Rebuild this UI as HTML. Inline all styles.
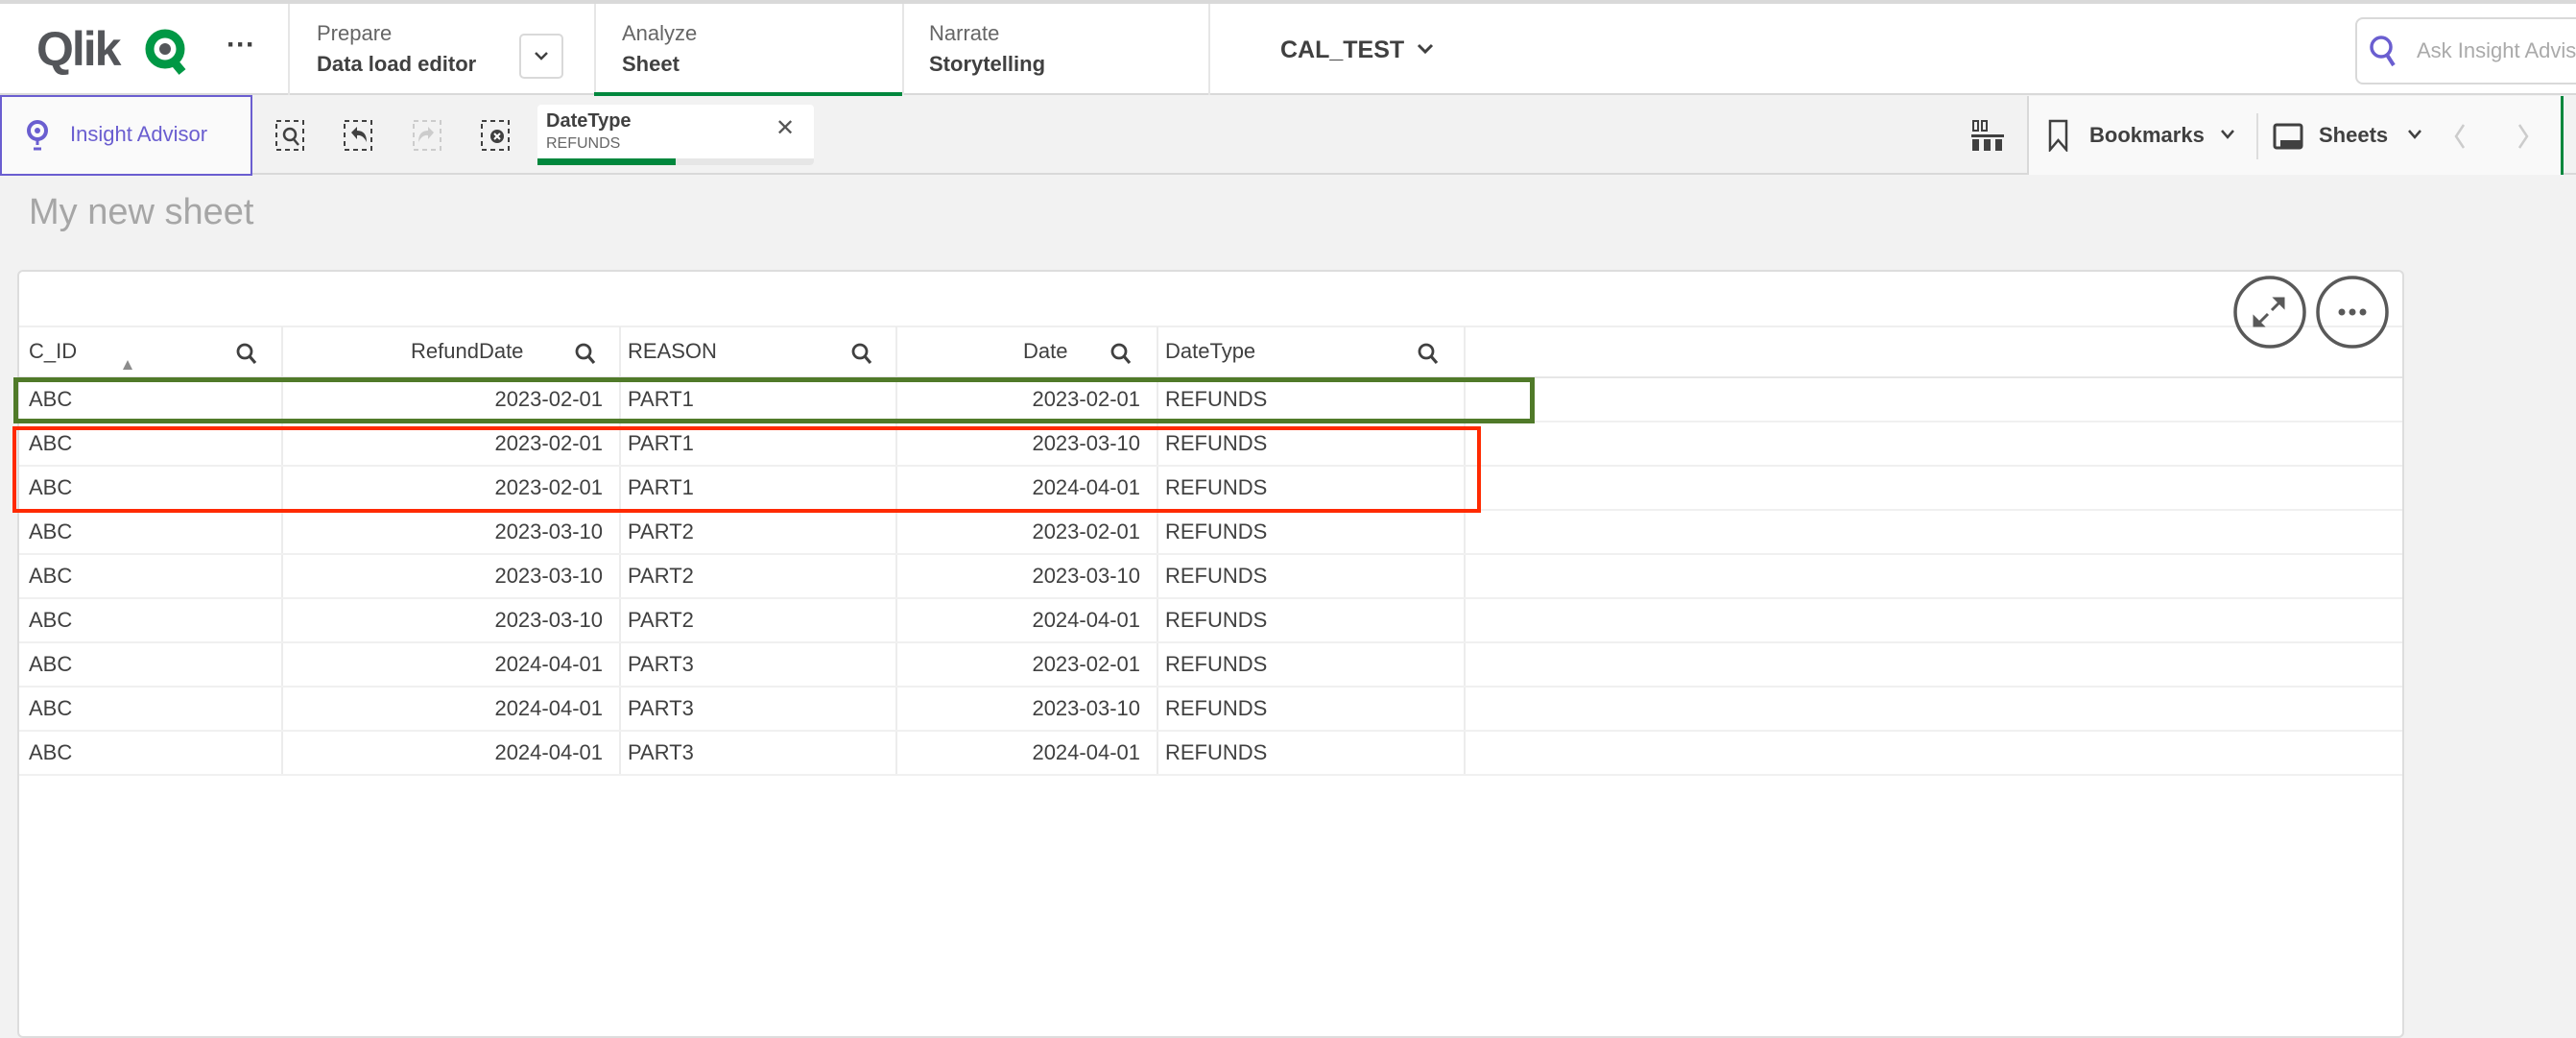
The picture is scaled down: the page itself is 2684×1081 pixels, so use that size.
<!DOCTYPE html>
<html><head><meta charset="utf-8"><style>
*{box-sizing:border-box;margin:0;padding:0}
body{width:2684px;height:1077px;overflow:hidden;background:#f2f2f2;font-family:"Liberation Sans",sans-serif;color:#404040;position:relative}
.a{position:absolute}
.t{position:absolute;white-space:nowrap}
.row{position:absolute;left:20px;width:2483px;height:46px;border-bottom:2px solid #f0f0f0}
.c{position:absolute;top:0;height:44px;line-height:44px;font-size:22px;color:#404040}
.vl{position:absolute;top:340px;width:2px;height:468px;background:#ececec}
</style></head><body>
<div class="a" style="left:0;top:0;width:2684px;height:4px;background:#d9d9d9"></div>
<div class="a" style="left:0;top:4px;width:2684px;height:95px;background:#fff;border-bottom:2px solid #d9d9d9"></div>
<!-- logo -->
<div class="t" style="left:38px;top:22px;font-size:50px;font-weight:bold;color:#54565a;letter-spacing:-2px">Qlik</div>
<svg class="a" style="left:150px;top:29px" width="52" height="50" viewBox="0 0 52 50"><circle cx="22" cy="22" r="16" fill="none" stroke="#009845" stroke-width="9"/><circle cx="22" cy="22" r="6" fill="#54565a"/><path d="M30 34 L40 46" stroke="#009845" stroke-width="9"/></svg>
<div class="t" style="left:236px;top:30px;font-size:30px;font-weight:bold;color:#404040">···</div>
<div class="a" style="left:300px;top:4px;width:2px;height:95px;background:#e6e6e6"></div>
<div class="a" style="left:619px;top:4px;width:2px;height:95px;background:#e6e6e6"></div>
<div class="a" style="left:940px;top:4px;width:2px;height:95px;background:#e6e6e6"></div>
<div class="a" style="left:1259px;top:4px;width:2px;height:95px;background:#e6e6e6"></div>
<div class="t" style="left:330px;top:22px;font-size:22px;color:#666">Prepare</div>
<div class="t" style="left:330px;top:54px;font-size:22px;font-weight:bold;color:#404040">Data load editor</div>
<div class="a" style="left:541px;top:35px;width:46px;height:47px;border:2px solid #d9d9d9;border-radius:5px"></div>
<svg class="a" style="left:556px;top:52px" width="16" height="12"><path d="M2 3 L8 9 L14 3" fill="none" stroke="#404040" stroke-width="2.5"/></svg>
<div class="t" style="left:648px;top:22px;font-size:22px;color:#666">Analyze</div>
<div class="t" style="left:648px;top:54px;font-size:22px;font-weight:bold;color:#404040">Sheet</div>
<div class="a" style="left:619px;top:96px;width:321px;height:4px;background:#00873d"></div>
<div class="t" style="left:968px;top:22px;font-size:22px;color:#666">Narrate</div>
<div class="t" style="left:968px;top:54px;font-size:22px;font-weight:bold;color:#404040">Storytelling</div>
<div class="t" style="left:1334px;top:38px;font-size:25px;font-weight:bold;color:#404040">CAL_TEST</div>
<svg class="a" style="left:1475px;top:44px" width="20" height="14"><path d="M3 3 L10 10 L17 3" fill="none" stroke="#404040" stroke-width="3"/></svg>
<div class="a" style="left:2454px;top:18px;width:240px;height:70px;border:2px solid #d9d9d9;border-radius:8px;background:#fff"></div>
<svg class="a" style="left:2468px;top:36px" width="30" height="36"><circle cx="13" cy="13" r="10" fill="none" stroke="#6a5ed0" stroke-width="3.5"/><path d="M19 21 L26 32" stroke="#6a5ed0" stroke-width="4"/></svg>
<div class="t" style="left:2518px;top:40px;font-size:22px;color:#aaa">Ask Insight Advis</div>
<!-- toolbar -->
<div class="a" style="left:0;top:100px;width:2684px;height:82px;background:#f2f2f2;border-bottom:2px solid #d9d9d9"></div>
<div class="a" style="left:0;top:99px;width:263px;height:84px;border:2px solid #6a5ed0;background:#fafafa"></div>
<svg class="a" style="left:26px;top:124px" width="26" height="34"><circle cx="13" cy="12" r="9" fill="none" stroke="#6a5ed0" stroke-width="4"/><circle cx="13" cy="12" r="3" fill="#6a5ed0"/><path d="M13 21 L13 27 M9 31 L17 31" stroke="#6a5ed0" stroke-width="3"/></svg>
<div class="t" style="left:73px;top:127px;font-size:22px;color:#6a5ed0">Insight Advisor</div>
<svg class="a" style="left:286px;top:124px" width="260" height="34">
<g fill="none" stroke="#404040" stroke-width="2" stroke-dasharray="5 4"><rect x="2" y="2" width="28" height="30"/><rect x="73" y="2" width="28" height="30"/><rect x="216" y="2" width="28" height="30"/></g>
<rect x="145" y="2" width="28" height="30" fill="none" stroke="#ccc" stroke-width="2" stroke-dasharray="5 4"/>
<circle cx="16" cy="16" r="6" fill="none" stroke="#404040" stroke-width="2.5"/><path d="M20 21 L25 27" stroke="#404040" stroke-width="2.5"/>
<path d="M80 14 L86 8 L86 12 Q96 12 96 24 Q92 16 86 17 L86 21 Z" fill="#404040"/>
<path d="M166 14 L160 8 L160 12 Q150 12 150 24 Q154 16 160 17 L160 21 Z" fill="#ccc"/>
<circle cx="232" cy="18" r="7" fill="#404040"/><path d="M229 15 L235 21 M235 15 L229 21" stroke="#fff" stroke-width="2"/>
</svg>
<div class="a" style="left:560px;top:109px;width:288px;height:63px;background:#fff;border-radius:4px"></div>
<div class="a" style="left:560px;top:165px;width:288px;height:7px;background:#e6e6e6;border-radius:0 0 4px 4px"></div>
<div class="a" style="left:560px;top:165px;width:144px;height:7px;background:#00873d"></div>
<div class="t" style="left:569px;top:115px;font-size:20px;font-weight:bold;color:#404040">DateType</div>
<div class="t" style="left:569px;top:141px;font-size:16px;color:#666">REFUNDS</div>
<div class="t" style="left:808px;top:119px;font-size:24px;color:#555">✕</div>
<svg class="a" style="left:2054px;top:124px" width="34" height="34"><rect x="2" y="2" width="5" height="10" fill="none" stroke="#404040" stroke-width="2"/><rect x="11" y="2" width="5" height="10" fill="none" stroke="#404040" stroke-width="2"/><rect x="0" y="16" width="34" height="3" fill="#404040"/><rect x="1" y="21" width="7" height="12" fill="#404040"/><rect x="13" y="21" width="7" height="12" fill="#404040"/><rect x="25" y="21" width="7" height="12" fill="#404040"/></svg>
<div class="a" style="left:2112px;top:100px;width:558px;height:82px;background:#f9f9f9;border-left:2px solid #d9d9d9"></div>
<div class="a" style="left:2668px;top:100px;width:3px;height:82px;background:#00873d"></div>
<svg class="a" style="left:2134px;top:124px" width="22" height="34"><path d="M2 2 L19 2 L19 32 L10.5 22 L2 32 Z" fill="none" stroke="#404040" stroke-width="2.5"/></svg>
<div class="t" style="left:2177px;top:128px;font-size:22px;font-weight:bold;color:#404040">Bookmarks</div>
<svg class="a" style="left:2313px;top:134px" width="16" height="12"><path d="M2 2 L8 9 L14 2" fill="none" stroke="#404040" stroke-width="2.5"/></svg>
<div class="a" style="left:2351px;top:118px;width:2px;height:48px;background:#ddd"></div>
<svg class="a" style="left:2368px;top:128px" width="32" height="28"><rect x="2" y="2" width="28" height="24" rx="2" fill="none" stroke="#404040" stroke-width="3"/><rect x="8" y="18" width="22" height="8" fill="#404040"/></svg>
<div class="t" style="left:2416px;top:128px;font-size:22px;font-weight:bold;color:#404040">Sheets</div>
<svg class="a" style="left:2508px;top:134px" width="16" height="12"><path d="M2 2 L8 9 L14 2" fill="none" stroke="#404040" stroke-width="2.5"/></svg>
<svg class="a" style="left:2555px;top:127px" width="90" height="30"><path d="M12 3 L4 15 L12 27 M70 3 L78 15 L70 27" fill="none" stroke="#ccc" stroke-width="2.5"/></svg>
<!-- title -->
<div class="t" style="left:30px;top:200px;font-size:38px;color:#a6a6a6">My new sheet</div>
<!-- card -->
<div class="a" style="left:18px;top:281px;width:2487px;height:800px;background:#fff;border:2px solid #ddd;border-radius:6px"></div>
<div class="a" style="left:20px;top:339px;width:2483px;height:2px;background:#efefef"></div>
<svg class="a" style="left:2320px;top:280px" width="180" height="90"><g fill="none" stroke="#595959" stroke-width="3.5"><circle cx="45" cy="45" r="36"/><circle cx="131" cy="45" r="36"/></g>
<path d="M47 43 L57 33 M51 31 L59 31 L59 39 Z" stroke="#595959" stroke-width="3" fill="#595959"/><path d="M43 47 L33 57 M29 51 L29 59 L37 59 Z" stroke="#595959" stroke-width="3" fill="#595959"/>
<circle cx="120" cy="45" r="3.5" fill="#595959"/><circle cx="131" cy="45" r="3.5" fill="#595959"/><circle cx="142" cy="45" r="3.5" fill="#595959"/></svg>
<div class="vl" style="left:293px"></div><div class="vl" style="left:645px"></div><div class="vl" style="left:933px"></div><div class="vl" style="left:1205px"></div><div class="vl" style="left:1525px"></div>
<div class="a" style="left:20px;top:392px;width:2483px;height:2px;background:#e6e6e6"></div>
<div class="t" style="left:30px;top:353px;font-size:22px">C_ID</div>
<div class="t" style="left:428px;top:353px;font-size:22px">RefundDate</div>
<div class="t" style="left:654px;top:353px;font-size:22px">REASON</div>
<div class="t" style="left:1066px;top:353px;font-size:22px">Date</div>
<div class="t" style="left:1214px;top:353px;font-size:22px">DateType</div>
<svg class="a" style="left:0;top:350px" width="1520" height="40"><g fill="none" stroke="#404040" stroke-width="2.8"><circle cx="255" cy="16" r="7"/><circle cx="608" cy="16" r="7"/><circle cx="896" cy="16" r="7"/><circle cx="1166" cy="16" r="7"/><circle cx="1486" cy="16" r="7"/></g><g stroke="#404040" stroke-width="3.2"><path d="M260 21 L266 28M613 21 L619 28M901 21 L907 28M1171 21 L1177 28M1491 21 L1497 28"/></g><path d="M128 43 L133 33 L138 43 Z" fill="#8c8c8c" transform="translate(0,-8)"/></svg>
<div class="row" style="top:394px"><span class="c" style="left:10px">ABC</span><span class="c" style="right:1875px">2023-02-01</span><span class="c" style="left:634px">PART1</span><span class="c" style="right:1315px">2023-02-01</span><span class="c" style="left:1194px">REFUNDS</span></div>
<div class="row" style="top:440px"><span class="c" style="left:10px">ABC</span><span class="c" style="right:1875px">2023-02-01</span><span class="c" style="left:634px">PART1</span><span class="c" style="right:1315px">2023-03-10</span><span class="c" style="left:1194px">REFUNDS</span></div>
<div class="row" style="top:486px"><span class="c" style="left:10px">ABC</span><span class="c" style="right:1875px">2023-02-01</span><span class="c" style="left:634px">PART1</span><span class="c" style="right:1315px">2024-04-01</span><span class="c" style="left:1194px">REFUNDS</span></div>
<div class="row" style="top:532px"><span class="c" style="left:10px">ABC</span><span class="c" style="right:1875px">2023-03-10</span><span class="c" style="left:634px">PART2</span><span class="c" style="right:1315px">2023-02-01</span><span class="c" style="left:1194px">REFUNDS</span></div>
<div class="row" style="top:578px"><span class="c" style="left:10px">ABC</span><span class="c" style="right:1875px">2023-03-10</span><span class="c" style="left:634px">PART2</span><span class="c" style="right:1315px">2023-03-10</span><span class="c" style="left:1194px">REFUNDS</span></div>
<div class="row" style="top:624px"><span class="c" style="left:10px">ABC</span><span class="c" style="right:1875px">2023-03-10</span><span class="c" style="left:634px">PART2</span><span class="c" style="right:1315px">2024-04-01</span><span class="c" style="left:1194px">REFUNDS</span></div>
<div class="row" style="top:670px"><span class="c" style="left:10px">ABC</span><span class="c" style="right:1875px">2024-04-01</span><span class="c" style="left:634px">PART3</span><span class="c" style="right:1315px">2023-02-01</span><span class="c" style="left:1194px">REFUNDS</span></div>
<div class="row" style="top:716px"><span class="c" style="left:10px">ABC</span><span class="c" style="right:1875px">2024-04-01</span><span class="c" style="left:634px">PART3</span><span class="c" style="right:1315px">2023-03-10</span><span class="c" style="left:1194px">REFUNDS</span></div>
<div class="row" style="top:762px"><span class="c" style="left:10px">ABC</span><span class="c" style="right:1875px">2024-04-01</span><span class="c" style="left:634px">PART3</span><span class="c" style="right:1315px">2024-04-01</span><span class="c" style="left:1194px">REFUNDS</span></div>
<!-- annotation boxes -->
<div class="a" style="left:14px;top:393px;width:1585px;height:48px;border:5px solid #507a29"></div>
<div class="a" style="left:13px;top:444px;width:1530px;height:90px;border:4px solid #ff2a00"></div>
</body></html>
